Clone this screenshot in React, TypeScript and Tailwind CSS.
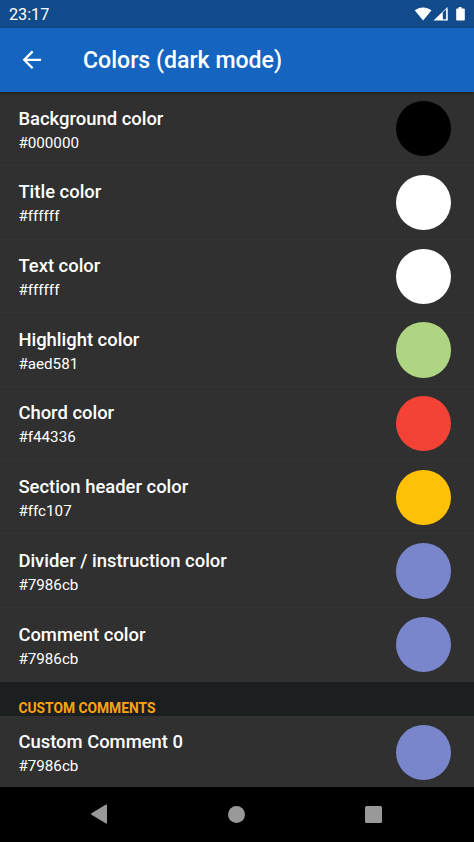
const items = [
  { name: 'Background color', color: '#000000' },
  { name: 'Title color', color: '#ffffff' },
  { name: 'Text color', color: '#ffffff' },
  { name: 'Highlight color', color: '#aed581' },
  { name: 'Chord color', color: '#f44336' },
  { name: 'Section header color', color: '#ffc107' },
  { name: 'Divider / instruction color', color: '#7986cb' },
  { name: 'Comment color', color: '#7986cb' },
];

function ColorRow({ name, color, divider = true }: { name: string; color: string; divider?: boolean }) {
  return (
    <div
      className={
        'flex h-[73.73px] shrink-0 items-center justify-between border-b pt-[0.6px] pr-[23.2px] pl-[18.4px] ' +
        (divider ? 'border-[#353535]' : 'border-transparent')
      }
    >
      <div className="flex flex-col pt-[3.6px]">
        <span className="text-[18.43px] leading-[24px] font-medium whitespace-nowrap">{name}</span>
        <span className="text-[15.2px] leading-[24px]">{color}</span>
      </div>
      <div className="size-[55.3px] rounded-full" style={{ backgroundColor: color }} />
    </div>
  );
}

export default function App() {
  return (
    <div className="flex h-[842px] w-[474px] flex-col overflow-hidden bg-[#303030] font-[Roboto,sans-serif] text-white">
      <div className="flex h-[27.6px] shrink-0 items-center justify-between bg-[#114b8c] pr-[8px] pl-[9px]">
        <span className="pt-[2px] text-[16.2px] leading-5">23:17</span>
        <svg width="52" height="16" viewBox="0 0 52 16" fill="white">
          <path d="M.7 4.300C5.600.400 12.600.400 17.500 4.300L9.100 14.500Z" />
          <path d="M19.500 14.500 33.500 1V14.500Z" />
          <path d="M28.800 13.300V6.400L32.300 3V13.300Z" fill="#114b8c" />
          <path d="M32.300 3H33.500V14.500H32.300Z" fill="white" />
          <path d="M44.600 1h3v1.500H50q.8 0 .8.8v10.400q0 .8-.8.8h-7q-.8 0-.8-.8V3.300q0-.8.8-.8h1.600Z" />
        </svg>
      </div>
      <header className="z-10 flex h-[64.5px] shrink-0 items-center bg-[#1565c0] pl-[18.4px] shadow-[0_1px_3px_rgba(0,0,0,0.45)]">
        <svg width="27.65" height="27.65" viewBox="0 0 24 24" fill="white">
          <path d="M20 11H7.830l5.590-5.590L12 4l-8 8 8 8 1.410-1.410L7.830 13H20v-2z" />
        </svg>
        <h1 className="ml-[37px] pt-[3px] text-[23.1px] leading-7 font-medium whitespace-nowrap">Colors (dark mode)</h1>
      </header>
      <main className="flex min-h-0 flex-1 flex-col overflow-hidden">
        {items.map((item, index) => (
          <ColorRow key={item.name} {...item} divider={index < items.length - 1} />
        ))}
        <div className="flex h-[34px] shrink-0 items-end bg-[#1c1f20] pl-[18.4px] text-[13.82px] leading-4 font-bold text-[#ffa313]">
          CUSTOM COMMENTS
        </div>
        <ColorRow name="Custom Comment 0" color="#7986cb" divider={false} />
      </main>
      <nav className="flex h-[55.3px] shrink-0 items-center justify-center gap-[120px] bg-black pr-[2px]">
        <svg width="18" height="20" viewBox="0 0 18 20" fill="#999">
          <path d="M16 .6q1-.5 1 .6v17.600q0 1.100-1 .6L1.500 10.700q-1-.7 0-1.400Z" />
        </svg>
        <div className="size-[17px] rounded-full bg-[#999]" />
        <div className="size-[17.5px] rounded-[1.500px] bg-[#999]" />
      </nav>
    </div>
  );
}
